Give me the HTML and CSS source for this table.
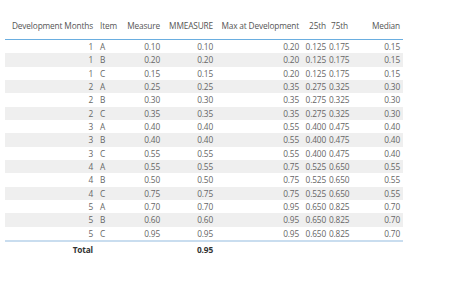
FILE: index.html
```html
<!DOCTYPE html>
<html lang="en">
<head>
    <meta charset="UTF-8">
    <title>Development Months</title>
    <link rel="stylesheet" href="styles.css">
</head>
<body>

<table class="matrix">
    <colgroup>
        <col class="c-dev">
        <col class="c-item">
        <col class="c-measure">
        <col class="c-mm">
        <col class="c-max">
        <col class="c-25">
        <col class="c-75">
        <col class="c-median">
    </colgroup>
    <thead>
        <tr>
            <th>Development Months</th>
            <th class="left">Item</th>
            <th>Measure</th>
            <th>MMEASURE</th>
            <th>Max at Development</th>
            <th>25th</th>
            <th>75th</th>
            <th>Median</th>
        </tr>
    </thead>
    <tbody>
        <tr><td>1</td><td class="left">A</td><td>0.10</td><td>0.10</td><td>0.20</td><td>0.125</td><td>0.175</td><td>0.15</td></tr>
        <tr><td>1</td><td class="left">B</td><td>0.20</td><td>0.20</td><td>0.20</td><td>0.125</td><td>0.175</td><td>0.15</td></tr>
        <tr><td>1</td><td class="left">C</td><td>0.15</td><td>0.15</td><td>0.20</td><td>0.125</td><td>0.175</td><td>0.15</td></tr>
        <tr><td>2</td><td class="left">A</td><td>0.25</td><td>0.25</td><td>0.35</td><td>0.275</td><td>0.325</td><td>0.30</td></tr>
        <tr><td>2</td><td class="left">B</td><td>0.30</td><td>0.30</td><td>0.35</td><td>0.275</td><td>0.325</td><td>0.30</td></tr>
        <tr><td>2</td><td class="left">C</td><td>0.35</td><td>0.35</td><td>0.35</td><td>0.275</td><td>0.325</td><td>0.30</td></tr>
        <tr><td>3</td><td class="left">A</td><td>0.40</td><td>0.40</td><td>0.55</td><td>0.400</td><td>0.475</td><td>0.40</td></tr>
        <tr><td>3</td><td class="left">B</td><td>0.40</td><td>0.40</td><td>0.55</td><td>0.400</td><td>0.475</td><td>0.40</td></tr>
        <tr><td>3</td><td class="left">C</td><td>0.55</td><td>0.55</td><td>0.55</td><td>0.400</td><td>0.475</td><td>0.40</td></tr>
        <tr><td>4</td><td class="left">A</td><td>0.55</td><td>0.55</td><td>0.75</td><td>0.525</td><td>0.650</td><td>0.55</td></tr>
        <tr><td>4</td><td class="left">B</td><td>0.50</td><td>0.50</td><td>0.75</td><td>0.525</td><td>0.650</td><td>0.55</td></tr>
        <tr><td>4</td><td class="left">C</td><td>0.75</td><td>0.75</td><td>0.75</td><td>0.525</td><td>0.650</td><td>0.55</td></tr>
        <tr><td>5</td><td class="left">A</td><td>0.70</td><td>0.70</td><td>0.95</td><td>0.650</td><td>0.825</td><td>0.70</td></tr>
        <tr><td>5</td><td class="left">B</td><td>0.60</td><td>0.60</td><td>0.95</td><td>0.650</td><td>0.825</td><td>0.70</td></tr>
        <tr><td>5</td><td class="left">C</td><td>0.95</td><td>0.95</td><td>0.95</td><td>0.650</td><td>0.825</td><td>0.70</td></tr>
    </tbody>
    <tfoot>
        <tr><td>Total</td><td></td><td></td><td>0.95</td><td></td><td></td><td></td><td></td></tr>
    </tfoot>
</table>

</body>
</html>
```

FILE: styles.css
```css
/* General styles */
body {
    font-family: "Open Sans", "Noto Sans", Arial, sans-serif;
    background-color: #fff;
    margin: 0;
    padding: 0;
}

/* Matrix table */
.matrix {
    margin: 17px 0 0 5px;
    width: 398px;
    table-layout: fixed;
    border-collapse: collapse;
    font-size: 8.3px;
    letter-spacing: -0.15px;
    color: #666;
}

.c-dev { width: 91px; }
.c-item { width: 26px; }
.c-measure { width: 41px; }
.c-mm { width: 53px; }
.c-max { width: 86px; }
.c-25 { width: 27px; }
.c-75 { width: 22px; }
.c-median { width: 52px; }

.matrix th,
.matrix td {
    padding: 0 3px 0 0;
    text-align: right;
    white-space: nowrap;
    overflow: visible;
}

.matrix .left {
    text-align: left;
    padding-left: 4px;
    padding-right: 0;
}

.matrix thead th {
    height: 14px;
    font-weight: normal;
    color: #555;
    vertical-align: bottom;
    padding-bottom: 8px;
    border-bottom: 1px solid #6aaee0;
}

.matrix tbody td {
    height: 13.33px;
    line-height: 13px;
}

.matrix tbody tr:nth-child(even) {
    background-color: #efefef;
}

.matrix tbody tr:last-child td {
    border-bottom: 2px solid #c9ddef;
}

.matrix tfoot td {
    height: 16px;
    font-weight: bold;
    color: #333;
    vertical-align: middle;
}
```
